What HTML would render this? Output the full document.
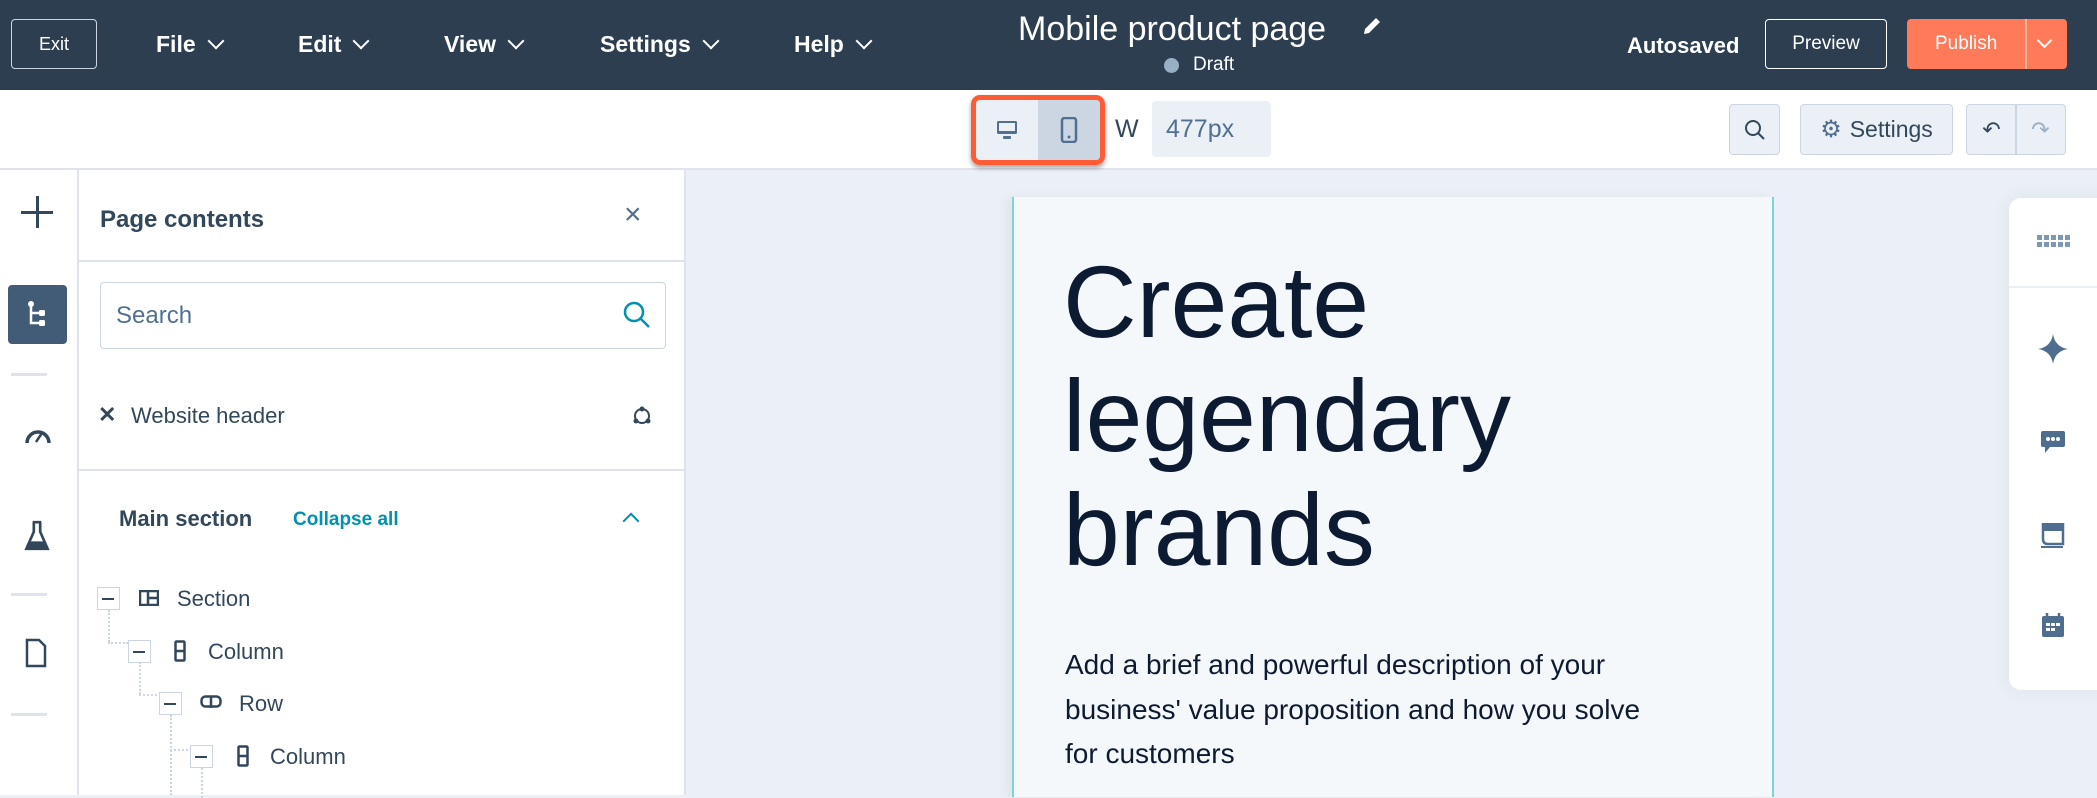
<!DOCTYPE html>
<html><head><meta charset="utf-8"><style>
*{box-sizing:border-box;margin:0;padding:0}
body{width:2097px;height:795px;overflow:hidden;position:relative;font-family:"Liberation Sans",sans-serif;background:#eaf0f6;color:#33475b}
.a{position:absolute}
.top{left:0;top:0;width:2097px;height:90px;background:#2d3e50}
.menu{color:#fff;font-weight:bold;font-size:23px;top:31px}
.chev{display:inline-block;width:12px;height:12px;border-right:2.5px solid #fff;border-bottom:2.5px solid #fff;transform:rotate(45deg);margin-left:14px;position:relative;top:-5px}
.btn{border:1.5px solid #fff;border-radius:4px;color:#fff;font-size:19px;display:flex;align-items:center;justify-content:center}
.tb{left:0;top:90px;width:2097px;height:80px;background:#fff;border-bottom:2px solid #dfe3eb}
.gb{background:#eaf0f6;border:1.5px solid #cbd6e2;border-radius:4px;display:flex;align-items:center;justify-content:center;color:#33475b;font-size:23px}
.rail{left:0;top:170px;width:79px;height:625px;background:#fff;border-right:2px solid #dfe3eb}
.panel{left:79px;top:170px;width:607px;height:625px;background:#fff;border-right:2px solid #dfe3eb}
.hr{height:2px;background:#dfe3eb;left:0;width:605px}
.box{width:23px;height:23px;border:1.5px solid #cbd6e2;background:#fff}
.box:after{content:"";position:absolute;left:4px;top:10px;width:12px;height:2px;background:#33475b}
.tl{font-size:22px;color:#33475b}
.dot{border-left:2px dotted #cbd6e2}
.doth{border-top:2px dotted #cbd6e2}
</style></head><body>
<div class="a top"></div>
<div class="a btn" style="left:11px;top:19px;width:86px;height:50px;font-size:18px;border-color:#cbd6e2">Exit</div>
<div class="a menu" style="left:156px">File<span class="chev"></span></div>
<div class="a menu" style="left:298px">Edit<span class="chev"></span></div>
<div class="a menu" style="left:444px">View<span class="chev"></span></div>
<div class="a menu" style="left:600px">Settings<span class="chev"></span></div>
<div class="a menu" style="left:794px">Help<span class="chev"></span></div>
<div class="a" style="left:1018px;top:10px;color:#fff;font-size:34px">Mobile product page</div>
<svg class="a" style="left:1360px;top:14px" width="24" height="24" viewBox="0 0 24 24"><path d="M4 20l1-5L16 4l4 4L9 19z" fill="#fff"/></svg>
<div class="a" style="left:1164px;top:58px;width:15px;height:15px;border-radius:50%;background:#99afc4"></div>
<div class="a" style="left:1193px;top:54px;color:#fff;font-size:19px">Draft</div>
<div class="a" style="left:1627px;top:33px;color:#fff;font-weight:bold;font-size:22px">Autosaved</div>
<div class="a btn" style="left:1765px;top:19px;width:122px;height:50px">Preview</div>
<div class="a btn" style="left:1907px;top:19px;width:160px;height:50px;background:#ff7a59;border-color:#ff7a59;justify-content:flex-start;padding-left:27px">Publish</div>
<div class="a" style="left:2025px;top:19px;width:1.5px;height:50px;background:#ffb59e"></div>
<div class="a" style="left:2039px;top:35px;width:11px;height:11px;border-right:2px solid #fff;border-bottom:2px solid #fff;transform:rotate(45deg)"></div>

<div class="a tb"></div>
<div class="a" style="left:971px;top:95px;width:134px;height:70px;border:5px solid #ff5c35;border-radius:9px;box-shadow:0 3px 5px rgba(0,0,0,.35);overflow:hidden;display:flex">
 <div style="width:62px;background:#eaf0f6;display:flex;align-items:center;justify-content:center"><svg width="24" height="24" viewBox="0 0 24 24"><rect x="2" y="3" width="20" height="13" rx="1.5" fill="#516f90"/><rect x="4" y="5" width="16" height="8" fill="#eaf0f6"/><rect x="8" y="18" width="8" height="3" rx="1" fill="#516f90"/></svg></div>
 <div style="flex:1;background:#cbd6e2;display:flex;align-items:center;justify-content:center"><svg width="20" height="26" viewBox="0 0 20 26"><rect x="3" y="1" width="14" height="24" rx="2.5" fill="none" stroke="#516f90" stroke-width="2.5"/><circle cx="10" cy="20" r="1.5" fill="#516f90"/></svg></div>
</div>
<div class="a" style="left:1115px;top:115px;font-size:25px;color:#33475b">W</div>
<div class="a" style="left:1152px;top:101px;width:119px;height:56px;background:#eaf0f6;border-radius:4px;font-size:25px;color:#516f90;padding:14px 14px">477px</div>
<div class="a gb" style="left:1729px;top:104px;width:51px;height:51px"><svg width="24" height="24" viewBox="0 0 24 24"><circle cx="10" cy="10" r="7" fill="none" stroke="#33475b" stroke-width="2"/><path d="M15 15l6 6" stroke="#33475b" stroke-width="2"/></svg></div>
<div class="a gb" style="left:1800px;top:104px;width:153px;height:51px"><span style="font-size:24px;margin-right:8px;color:#516f90">⚙</span>Settings</div>
<div class="a gb" style="left:1966px;top:104px;width:100px;height:51px;justify-content:space-around"><span style="font-size:22px">↶</span><span style="font-size:22px;color:#99afc4">↷</span></div>
<div class="a" style="left:2015px;top:104px;width:1.5px;height:51px;background:#cbd6e2"></div>

<div class="a rail"></div>
<div class="a" style="left:21px;top:211px;width:32px;height:3px;background:#33475b"></div>
<div class="a" style="left:36px;top:196px;width:3px;height:32px;background:#33475b"></div>
<div class="a" style="left:8px;top:285px;width:59px;height:59px;background:#425b76;border-radius:4px"></div>
<svg class="a" style="left:26px;top:300px" width="22" height="28" viewBox="0 0 22 28"><path d="M5 3v20h10M5 13h10" stroke="#fff" stroke-width="2.5" fill="none"/><circle cx="5" cy="4" r="3" fill="#fff"/><rect x="13" y="10" width="6" height="6" rx="1.5" fill="#fff"/><rect x="13" y="20" width="6" height="6" rx="1.5" fill="#fff"/></svg>
<div class="a" style="left:11px;top:373px;width:36px;height:3px;background:#dfe3eb"></div>
<svg class="a" style="left:24px;top:425px" width="28" height="20" viewBox="0 0 28 20"><path d="M3 18A11 11 0 0 1 25 18" stroke="#33475b" stroke-width="3.5" fill="none"/><path d="M12 17l6-9" stroke="#33475b" stroke-width="2.5"/></svg>
<svg class="a" style="left:24px;top:519px" width="26" height="34" viewBox="0 0 24 32"><path d="M8 3h8M9 3v9L2 28h20L15 12V3" stroke="#33475b" stroke-width="2.5" fill="none"/><path d="M5 21h14l3 7H2z" fill="#33475b"/></svg>
<div class="a" style="left:11px;top:593px;width:36px;height:3px;background:#dfe3eb"></div>
<svg class="a" style="left:25px;top:638px" width="22" height="30" viewBox="0 0 22 30"><path d="M2 2h12l6 6v20H2z" fill="none" stroke="#33475b" stroke-width="2.5"/></svg>
<div class="a" style="left:11px;top:713px;width:36px;height:3px;background:#dfe3eb"></div>

<div class="a panel">
 <div class="a" style="left:21px;top:36px;font-size:24px;font-weight:bold;color:#33475b">Page contents</div>
 <div class="a" style="left:545px;top:28px;font-size:30px;color:#516f90;font-weight:300">×</div>
 <div class="a hr" style="top:90px"></div>
 <div class="a" style="left:21px;top:112px;width:566px;height:67px;border:1.5px solid #cbd6e2;border-radius:4px;font-size:24px;color:#516f90;padding:19px 15px">Search</div>
 <svg class="a" style="left:543px;top:130px" width="30" height="30" viewBox="0 0 30 30"><circle cx="12" cy="12" r="9" fill="none" stroke="#0091ae" stroke-width="2.5"/><path d="M19 19l8 8" stroke="#0091ae" stroke-width="2.5"/></svg>
 <div class="a" style="left:19px;top:232px;font-size:22px;font-weight:bold;color:#33475b">✕</div>
 <div class="a tl" style="left:52px;top:233px">Website header</div>
 <svg class="a" style="left:552px;top:235px" width="22" height="22" viewBox="0 0 22 22"><circle cx="11" cy="11" r="7" fill="none" stroke="#33475b" stroke-width="2"/><circle cx="11" cy="4" r="2.5" fill="#33475b"/><circle cx="5" cy="16" r="2.5" fill="#33475b"/><circle cx="17" cy="16" r="2.5" fill="#33475b"/></svg>
 <div class="a hr" style="top:299px"></div>
 <div class="a" style="left:40px;top:336px;font-size:22px;font-weight:bold;color:#33475b">Main section</div>
 <div class="a" style="left:214px;top:339px;font-size:19px;font-weight:bold;color:#0091ae">Collapse all</div>
 <div class="a" style="left:546px;top:345px;width:12px;height:12px;border-left:2.5px solid #0091ae;border-top:2.5px solid #0091ae;transform:rotate(45deg)"></div>
 <div class="a dot" style="left:29px;top:440px;height:32px"></div><div class="a doth" style="left:29px;top:472px;width:20px"></div>
 <div class="a dot" style="left:60px;top:492px;height:32px"></div><div class="a doth" style="left:60px;top:524px;width:18px"></div>
 <div class="a dot" style="left:91px;top:545px;height:80px"></div><div class="a doth" style="left:91px;top:579px;width:18px"></div>
 <div class="a dot" style="left:122px;top:598px;height:30px"></div>
 <div class="a box" style="left:18px;top:417px"></div><svg class="a" style="left:60px;top:420px" width="20" height="16"><rect x="1" y="1" width="18" height="14" fill="none" stroke="#33475b" stroke-width="2.5"/><path d="M9 1v14M9 8h10" stroke="#33475b" stroke-width="2.5"/></svg><div class="a tl" style="left:98px;top:416px">Section</div>
 <div class="a box" style="left:49px;top:470px"></div><svg class="a" style="left:95px;top:470px" width="12" height="22"><rect x="1.5" y="1.5" width="9" height="19" rx="1" fill="none" stroke="#33475b" stroke-width="2.5"/><path d="M1 11h10" stroke="#33475b" stroke-width="2.5"/></svg><div class="a tl" style="left:129px;top:469px">Column</div>
 <div class="a box" style="left:80px;top:522px"></div><svg class="a" style="left:121px;top:525px" width="22" height="14"><rect x="1.5" y="1.5" width="19" height="10" rx="4" fill="none" stroke="#33475b" stroke-width="2.5"/><path d="M11 1v12" stroke="#33475b" stroke-width="2.5"/></svg><div class="a tl" style="left:160px;top:521px">Row</div>
 <div class="a box" style="left:111px;top:575px"></div><svg class="a" style="left:158px;top:575px" width="12" height="22"><rect x="1.5" y="1.5" width="9" height="19" rx="1" fill="none" stroke="#33475b" stroke-width="2.5"/><path d="M1 11h10" stroke="#33475b" stroke-width="2.5"/></svg><div class="a tl" style="left:191px;top:574px">Column</div>
</div>

<div class="a" style="left:1012px;top:197px;width:762px;height:600px;background:#f5f8fa;border-left:2px solid #7fd1de;border-right:2px solid #7fd1de;box-shadow:-6px 0 10px rgba(0,0,0,.05)"></div>
<div class="a" style="left:1063px;top:245px;font-size:102px;line-height:114px;color:#0c1a32">Create<br>legendary<br>brands</div>
<div class="a" style="left:1065px;top:643px;font-size:28px;line-height:44.5px;color:#0c1a32;width:610px">Add a brief and powerful description of your business' value proposition and how you solve for customers</div>

<div class="a" style="left:2009px;top:198px;width:100px;height:492px;background:#fff;border-radius:12px;box-shadow:0 0 18px rgba(45,62,80,.08)"></div>
<div class="a" style="left:2009px;top:286px;width:88px;height:2px;background:#eaf0f6"></div>
<svg class="a" style="left:2036px;top:234px" width="36" height="14"><g fill="#7c98b6"><rect x="1" y="1" width="5" height="5"/><rect x="8" y="1" width="5" height="5"/><rect x="15" y="1" width="5" height="5"/><rect x="22" y="1" width="5" height="5"/><rect x="29" y="1" width="5" height="5"/><rect x="1" y="8" width="5" height="5"/><rect x="8" y="8" width="5" height="5"/><rect x="15" y="8" width="5" height="5"/><rect x="22" y="8" width="5" height="5"/><rect x="29" y="8" width="5" height="5"/></g></svg>
<svg class="a" style="left:2038px;top:334px" width="30" height="30" viewBox="0 0 30 30"><path d="M15 0Q17 13 30 15Q17 17 15 30Q13 17 0 15Q13 13 15 0z" fill="#4f6d8f"/></svg>
<svg class="a" style="left:2040px;top:430px" width="26" height="24" viewBox="0 0 26 24"><path d="M3 1h20a2 2 0 0 1 2 2v12a2 2 0 0 1-2 2H10l-5 6v-6H3a2 2 0 0 1-2-2V3a2 2 0 0 1 2-2z" fill="#4f6d8f"/><circle cx="8" cy="9" r="2" fill="#fff"/><circle cx="13" cy="9" r="2" fill="#fff"/><circle cx="18" cy="9" r="2" fill="#fff"/></svg>
<svg class="a" style="left:2040px;top:523px" width="26" height="26" viewBox="0 0 26 26"><path d="M3 1h20v20H8Q3 21 3 16z" fill="none" stroke="#4f6d8f" stroke-width="2.5"/><rect x="3" y="1" width="20" height="7" fill="#4f6d8f"/><path d="M1 24h22" stroke="#4f6d8f" stroke-width="2"/></svg>
<svg class="a" style="left:2041px;top:612px" width="24" height="26" viewBox="0 0 24 26"><rect x="1" y="4" width="22" height="21" rx="2" fill="#4f6d8f"/><path d="M6 1v5M18 1v5" stroke="#4f6d8f" stroke-width="2.5"/><g fill="#fff"><rect x="5" y="11" width="4" height="3"/><rect x="10" y="11" width="4" height="3"/><rect x="15" y="11" width="4" height="3"/><rect x="5" y="16" width="4" height="3"/><rect x="10" y="16" width="4" height="3"/></g></svg>
</body></html>
